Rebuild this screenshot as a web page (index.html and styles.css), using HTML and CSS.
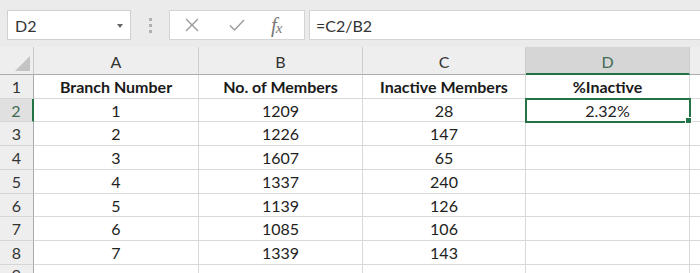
FILE: index.html
```html
<!DOCTYPE html>
<html>
<head>
<meta charset="utf-8">
<link rel="stylesheet" href="styles.css">
</head>
<body>
<div class="toolbar">
  <div class="namebox"><span>D2</span><span class="caret"></span></div>
  <div class="grip"><i></i><i></i><i></i></div>
  <div class="buttons">
    <svg class="ic" width="14" height="14" viewBox="0 0 14 14"><path d="M1 1L13 13M13 1L1 13" stroke="#9a9a9a" stroke-width="1.4" fill="none"/></svg>
    <svg class="ic" width="16" height="14" viewBox="0 0 16 14"><path d="M1 7.5L5.5 12L15 2" stroke="#9a9a9a" stroke-width="1.4" fill="none"/></svg>
    <span class="fx">f<span class="x">x</span></span>
  </div>
  <div class="formula">=C2/B2</div>
</div>
<div class="sheet">
  <div class="corner"><span class="tri"></span></div>
  <div class="ch">A</div><div class="ch">B</div><div class="ch">C</div><div class="ch sel">D</div><div class="ch rest"></div>

  <div class="rh">1</div><div class="c b">Branch Number</div><div class="c b">No. of Members</div><div class="c b">Inactive Members</div><div class="c b">%Inactive</div><div class="c rest"></div>
  <div class="rh sel">2</div><div class="c">1</div><div class="c">1209</div><div class="c">28</div><div class="c active">2.32%<span class="handle"></span></div><div class="c rest"></div>
  <div class="rh">3</div><div class="c">2</div><div class="c">1226</div><div class="c">147</div><div class="c"></div><div class="c rest"></div>
  <div class="rh">4</div><div class="c">3</div><div class="c">1607</div><div class="c">65</div><div class="c"></div><div class="c rest"></div>
  <div class="rh">5</div><div class="c">4</div><div class="c">1337</div><div class="c">240</div><div class="c"></div><div class="c rest"></div>
  <div class="rh">6</div><div class="c">5</div><div class="c">1139</div><div class="c">126</div><div class="c"></div><div class="c rest"></div>
  <div class="rh">7</div><div class="c">6</div><div class="c">1085</div><div class="c">106</div><div class="c"></div><div class="c rest"></div>
  <div class="rh">8</div><div class="c">7</div><div class="c">1339</div><div class="c">143</div><div class="c"></div><div class="c rest"></div>
  <div class="rh">9</div><div class="c"></div><div class="c"></div><div class="c"></div><div class="c"></div><div class="c rest"></div>
</div>
</body>
</html>
```

FILE: styles.css
```css
* { box-sizing: border-box; }
html, body { margin: 0; padding: 0; }
body {
  width: 700px;
  height: 273px;
  overflow: hidden;
  background: #ffffff;
  font-family: Lato, "Open Sans", sans-serif;
  color: #222;
}
.toolbar {
  height: 47px;
  background: #ebebeb;
  display: flex;
  align-items: flex-start;
  padding: 10px 0 0 7px;
}
.namebox {
  width: 124px;
  height: 30px;
  background: #fff;
  border: 1px solid #cfcfcf;
  display: flex;
  align-items: center;
  justify-content: space-between;
  padding: 0 7px 0 7px;
  font-size: 16px;
  color: #333;
}
.caret {
  width: 0; height: 0;
  border-left: 3.5px solid transparent;
  border-right: 3.5px solid transparent;
  border-top: 4px solid #666;
  margin-top: 1px;
}
.grip {
  width: 38px;
  height: 30px;
  display: flex;
  flex-direction: column;
  align-items: center;
  justify-content: center;
  gap: 3px;
}
.grip i { width: 3px; height: 3px; background: #b0b0b0; display: block; }
.buttons {
  width: 136px;
  height: 30px;
  background: #fff;
  border: 1px solid #d4d4d4;
  display: flex;
  align-items: center;
  padding: 0 0 0 15px;
}
.buttons .ic:first-child { margin-right: 30px; }
.buttons .ic:nth-child(2) { margin-right: 26px; }
.fx {
  font-family: "Liberation Serif", serif;
  font-style: italic;
  font-size: 21px;
  color: #7a7a7a;
  line-height: 1;
}
.fx .x { font-size: 15px; position: relative; top: 1px; margin-left: -1px; }
.formula {
  flex: 1;
  height: 30px;
  margin-left: 4px;
  background: #fff;
  border: 1px solid #d4d4d4;
  border-right: none;
  display: flex;
  align-items: center;
  padding-left: 6px;
  font-size: 16px;
  color: #333;
}
.sheet {
  display: grid;
  grid-template-columns: 34px 165px 164px 163px 164px 1fr;
  grid-template-rows: 28px 24px 23px 24px 24px 24px 23px 24px 24px 1fr;
  height: 226px;
  font-size: 16px;
}
.corner {
  background: #eeeeee;
  border-right: 1px solid #c8c8c8;
  border-bottom: 1px solid #ababab;
  position: relative;
}
.tri {
  position: absolute;
  right: 3px;
  bottom: 3px;
  width: 0; height: 0;
  border-left: 15px solid transparent;
  border-bottom: 15px solid #c4c4c4;
}
.ch {
  background: #eeeeee;
  border-right: 1px solid #cdcdcd;
  border-bottom: 1px solid #ababab;
  display: flex;
  align-items: center;
  justify-content: center;
  color: #333;
  padding-top: 2px;
}
.ch.sel {
  background: #d6d6d6;
  border-bottom: 2px solid #217346;
  color: #3e6b52;
}
.ch.rest { border-right: none; }
.rh {
  background: #eeeeee;
  border-right: 1px solid #ababab;
  border-bottom: 1px solid #d6d6d6;
  display: flex;
  align-items: center;
  justify-content: center;
  color: #333;
}
.rh.sel {
  background: #e0e0e0;
  border-right: 2px solid #217346;
  color: #3e6b52;
}
.c {
  border-right: 1px solid #d9d9d9;
  border-bottom: 1px solid #d9d9d9;
  display: flex;
  align-items: center;
  justify-content: center;
  color: #222;
  position: relative;
}
.c.b { font-weight: 700; color: #1a1a1a; }
.c.rest { border-right: none; }
.c.active {
  outline: 2px solid #217346;
  outline-offset: -1px;
  z-index: 1;
}
.handle {
  position: absolute;
  right: -3px;
  bottom: -3px;
  width: 5px;
  height: 5px;
  background: #217346;
  border: 1px solid #fff;
  box-sizing: content-box;
}
```
